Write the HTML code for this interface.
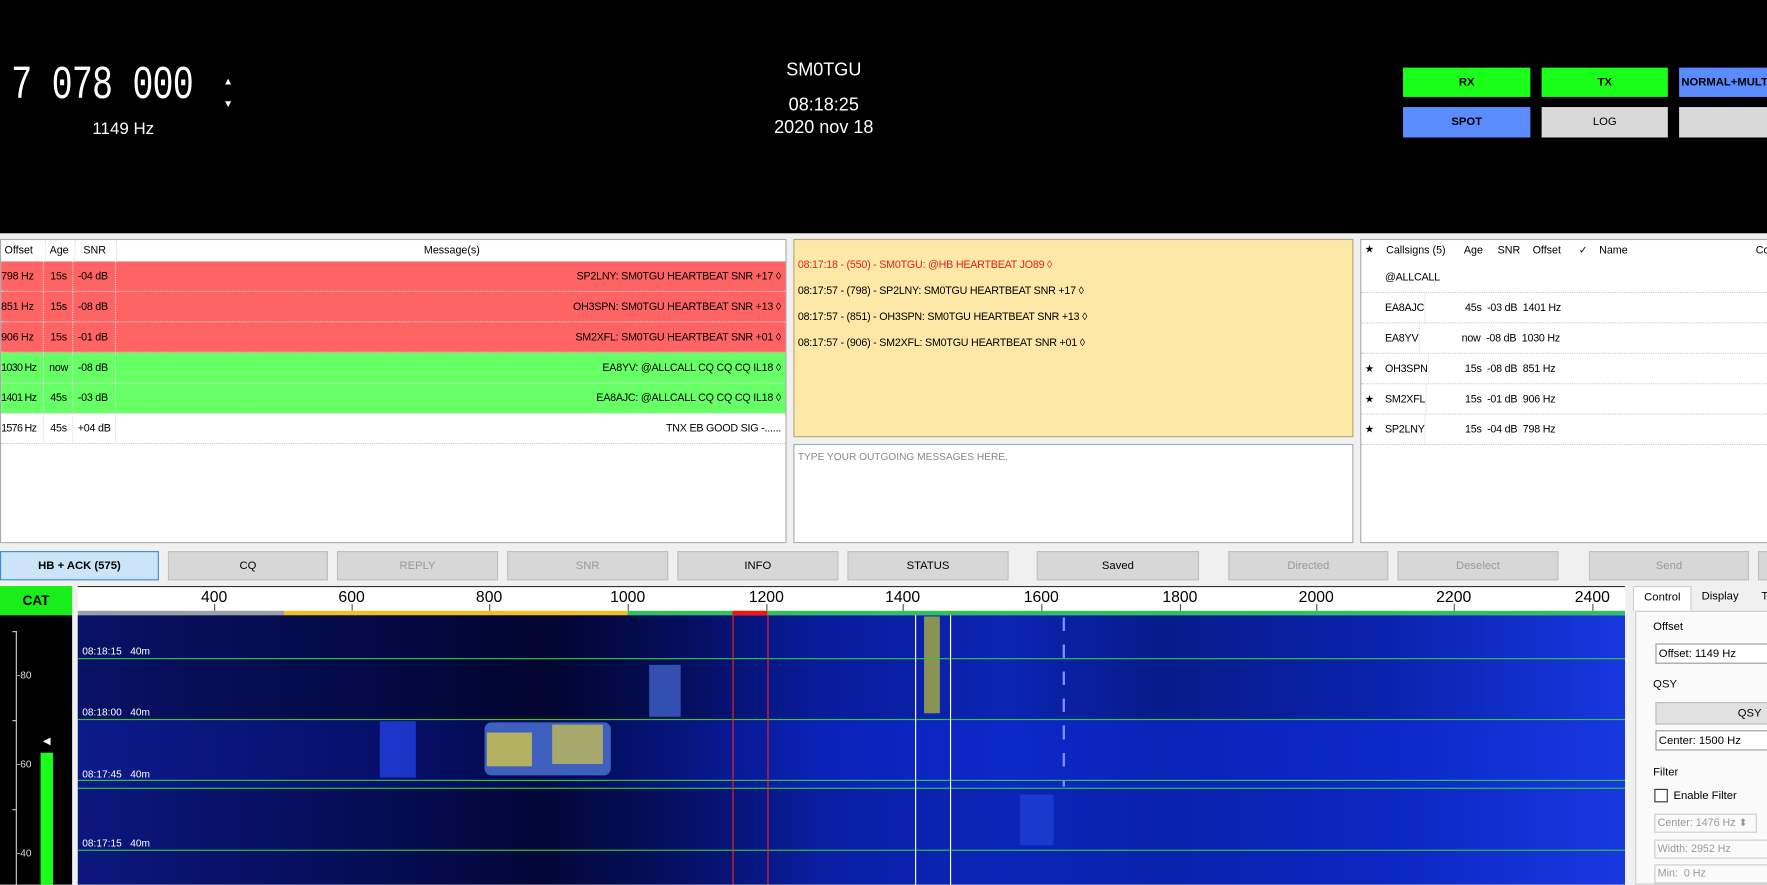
<!DOCTYPE html>
<html><head><meta charset="utf-8"><style>
*{box-sizing:border-box;margin:0;padding:0;white-space:nowrap}
html,body{width:1767px;height:885px;overflow:hidden;background:#f0f0f0}
#w{position:absolute;left:0;top:0;width:1568px;height:785px;transform:scale(1.12691);transform-origin:0 0;font-family:"Liberation Sans",sans-serif;font-size:10px;color:#000}
.a{position:absolute}
.btn{position:absolute;height:26px;display:flex;align-items:center;justify-content:center;font-size:10px}
.row{position:absolute;left:0;height:27px;border-bottom:1px dotted #ccc;font-size:9.5px;letter-spacing:-0.2px}
.c{position:absolute;top:0;height:27px;line-height:27px;border-right:1px dotted #ddd;overflow:hidden}
.wb{position:absolute;top:489px;height:26px;background:#d7d7d7;border:1px solid #bfbfbf;display:flex;align-items:center;justify-content:center;font-size:10px;color:#000}
.dis{color:#9a9a9a}
.gl{position:absolute;left:69px;width:1373px;height:1px;background:#2ecc40}
.ts{position:absolute;left:73px;color:#fff;font-size:9px}
.lab{position:absolute;top:521px;font-size:14px;transform:translateX(-50%)}
.tk{position:absolute;top:536px;width:1px;height:6px;background:#555}
</style></head><body><div id="w">
<div class="a" style="left:0;top:0;width:1568px;height:207px;background:#000"></div>
<div class="a" style="left:10px;top:52px;color:#fff;font-family:'Liberation Mono',monospace;font-size:42px;letter-spacing:-1px;transform:scaleX(0.74);transform-origin:0 0">7 078 000</div>
<div class="a" style="left:198px;top:62px;color:#fff;font-size:9px;line-height:20px;white-space:normal">▲<br>▼</div>
<div class="a" style="left:82px;top:106px;color:#fff;font-size:15px">1149 Hz</div>
<div class="a" style="left:731px;top:54px;color:#fff;font-size:16px;transform:translateX(-50%)">SM0TGU</div>
<div class="a" style="left:731px;top:85px;color:#fff;font-size:16px;transform:translateX(-50%)">08:18:25</div>
<div class="a" style="left:731px;top:105px;color:#fff;font-size:16px;transform:translateX(-50%)">2020 nov 18</div>
<div class="btn" style="left:1245px;top:60px;width:113px;background:#1aff1a;font-weight:bold">RX</div>
<div class="btn" style="left:1368px;top:60px;width:112px;background:#1aff1a;font-weight:bold">TX</div>
<div class="btn" style="left:1490px;top:60px;width:90px;background:#5b8cff;font-weight:bold;justify-content:flex-start;padding-left:2px;overflow:hidden">NORMAL+MULTI</div>
<div class="btn" style="left:1245px;top:95px;width:113px;height:27px;background:#5b8cff;font-weight:bold">SPOT</div>
<div class="btn" style="left:1368px;top:95px;width:112px;height:27px;background:#d9d9d9">LOG</div>
<div class="btn" style="left:1490px;top:95px;width:90px;height:27px;background:#d9d9d9"></div>

<div class="a" style="left:0;top:212px;width:698px;height:270px;background:#fff;border:1px solid #aaa;overflow:hidden;font-size:9.5px">
  <div class="a" style="left:3px;top:4px">Offset</div>
  <div class="a" style="left:43px;top:4px">Age</div>
  <div class="a" style="left:73px;top:4px">SNR</div>
  <div class="a" style="left:39px;top:0;width:1px;height:20px;border-left:1px dotted #ddd"></div>
  <div class="a" style="left:65px;top:0;width:1px;height:20px;border-left:1px dotted #ddd"></div>
  <div class="a" style="left:102px;top:0;width:1px;height:20px;border-left:1px dotted #ddd"></div>
  <div class="a" style="left:400px;top:4px;transform:translateX(-50%)">Message(s)</div>
</div>
<div class="a" style="left:1px;top:232px;width:696px">
 <div class="row" style="top:0;width:696px;background:#ff6464"><div class="c" style="left:0;width:38px">798 Hz</div><div class="c" style="left:39px;width:25px;text-align:center">15s</div><div class="c" style="left:65px;width:37px;padding-left:3px">-04 dB</div><div class="c" style="right:4px;border:none">SP2LNY: SM0TGU HEARTBEAT SNR +17 ◊</div></div>
 <div class="row" style="top:27px;width:696px;background:#ff6464"><div class="c" style="left:0;width:38px">851 Hz</div><div class="c" style="left:39px;width:25px;text-align:center">15s</div><div class="c" style="left:65px;width:37px;padding-left:3px">-08 dB</div><div class="c" style="right:4px;border:none">OH3SPN: SM0TGU HEARTBEAT SNR +13 ◊</div></div>
 <div class="row" style="top:54px;width:696px;background:#ff6464"><div class="c" style="left:0;width:38px">906 Hz</div><div class="c" style="left:39px;width:25px;text-align:center">15s</div><div class="c" style="left:65px;width:37px;padding-left:3px">-01 dB</div><div class="c" style="right:4px;border:none">SM2XFL: SM0TGU HEARTBEAT SNR +01 ◊</div></div>
 <div class="row" style="top:81px;width:696px;background:#66ff66"><div class="c" style="left:0;width:38px;letter-spacing:-0.6px">1030 Hz</div><div class="c" style="left:39px;width:25px;text-align:center">now</div><div class="c" style="left:65px;width:37px;padding-left:3px">-08 dB</div><div class="c" style="right:4px;border:none">EA8YV: @ALLCALL CQ CQ CQ IL18 ◊</div></div>
 <div class="row" style="top:108px;width:696px;background:#66ff66"><div class="c" style="left:0;width:38px;letter-spacing:-0.6px">1401 Hz</div><div class="c" style="left:39px;width:25px;text-align:center">45s</div><div class="c" style="left:65px;width:37px;padding-left:3px">-03 dB</div><div class="c" style="right:4px;border:none">EA8AJC: @ALLCALL CQ CQ CQ IL18 ◊</div></div>
 <div class="row" style="top:135px;width:696px;background:#fff"><div class="c" style="left:0;width:38px;letter-spacing:-0.6px">1576 Hz</div><div class="c" style="left:39px;width:25px;text-align:center">45s</div><div class="c" style="left:65px;width:37px;padding-left:3px">+04 dB</div><div class="c" style="right:4px;border:none">TNX EB GOOD SIG -......</div></div>
</div>

<div class="a" style="left:704px;top:212px;width:497px;height:176px;background:#fde8a8;border:1px solid #b8a878;font-size:9.5px;letter-spacing:-0.2px">
 <div class="a" style="left:3px;top:17px;color:#e02020">08:17:18 - (550) - SM0TGU: @HB HEARTBEAT JO89 ◊</div>
 <div class="a" style="left:3px;top:40px">08:17:57 - (798) - SP2LNY: SM0TGU HEARTBEAT SNR +17 ◊</div>
 <div class="a" style="left:3px;top:63px">08:17:57 - (851) - OH3SPN: SM0TGU HEARTBEAT SNR +13 ◊</div>
 <div class="a" style="left:3px;top:86px">08:17:57 - (906) - SM2XFL: SM0TGU HEARTBEAT SNR +01 ◊</div>
</div>
<div class="a" style="left:704px;top:394px;width:497px;height:88px;background:#fff;border:1px solid #aaa;font-size:9px;color:#888;padding:5px 3px">TYPE YOUR OUTGOING MESSAGES HERE.</div>

<div class="a" style="left:1207px;top:212px;width:370px;height:270px;background:#fff;border:1px solid #aaa;overflow:hidden;font-size:9.5px">
 <div class="a" style="left:3px;top:3px">★</div>
 <div class="a" style="left:22px;top:4px">Callsigns (5)</div>
 <div class="a" style="left:91px;top:4px">Age</div>
 <div class="a" style="left:121px;top:4px">SNR</div>
 <div class="a" style="left:152px;top:4px">Offset</div>
 <div class="a" style="left:193px;top:4px">✓</div>
 <div class="a" style="left:211px;top:4px">Name</div>
 <div class="a" style="left:350px;top:4px">Co</div>
 <div class="a" style="left:0;top:20px;width:370px">
  <div class="row" style="top:0;width:370px"><div class="c" style="left:21px;border:none">@ALLCALL</div></div>
  <div class="row" style="top:27px;width:370px"><div class="c" style="left:21px">EA8AJC</div><div class="c" style="left:92px;border:none">45s &nbsp;-03 dB &nbsp;1401 Hz</div></div>
  <div class="row" style="top:54px;width:370px"><div class="c" style="left:21px">EA8YV</div><div class="c" style="left:89px;border:none">now &nbsp;-08 dB &nbsp;1030 Hz</div></div>
  <div class="row" style="top:81px;width:370px"><div class="c" style="left:3px;border:none">★</div><div class="c" style="left:21px">OH3SPN</div><div class="c" style="left:92px;border:none">15s &nbsp;-08 dB &nbsp;851 Hz</div></div>
  <div class="row" style="top:108px;width:370px"><div class="c" style="left:3px;border:none">★</div><div class="c" style="left:21px">SM2XFL</div><div class="c" style="left:92px;border:none">15s &nbsp;-01 dB &nbsp;906 Hz</div></div>
  <div class="row" style="top:135px;width:370px"><div class="c" style="left:3px;border:none">★</div><div class="c" style="left:21px">SP2LNY</div><div class="c" style="left:92px;border:none">15s &nbsp;-04 dB &nbsp;798 Hz</div></div>
 </div>
</div>

<div class="wb" style="left:0;width:141px;background:#cce4f7;border-color:#3a8ad8;font-weight:bold">HB + ACK (575)</div>
<div class="wb" style="left:149px;width:142px">CQ</div>
<div class="wb dis" style="left:299px;width:143px">REPLY</div>
<div class="wb dis" style="left:450px;width:143px">SNR</div>
<div class="wb" style="left:601px;width:143px">INFO</div>
<div class="wb" style="left:752px;width:143px">STATUS</div>
<div class="wb" style="left:920px;width:144px">Saved</div>
<div class="wb dis" style="left:1090px;width:142px">Directed</div>
<div class="wb dis" style="left:1240px;width:143px">Deselect</div>
<div class="wb dis" style="left:1410px;width:142px">Send</div>
<div class="wb" style="left:1560px;width:20px"></div>

<div class="a" style="left:0;top:520px;width:64px;height:26px;background:#1aee1a;font-size:12px;font-weight:bold;display:flex;align-items:center;justify-content:center">CAT</div>
<div class="a" style="left:0;top:546px;width:64px;height:239px;background:#000"></div>
<div class="a" style="left:14px;top:560px;width:1px;height:225px;background:#ccc"></div>
<div class="a" style="left:11px;top:560px;width:4px;height:1px;background:#ccc"></div>
<div class="a" style="left:11px;top:639px;width:4px;height:1px;background:#ccc"></div>
<div class="a" style="left:11px;top:718px;width:4px;height:1px;background:#ccc"></div>
<div class="a" style="left:15px;top:594px;color:#ddd;font-size:9px">-80</div>
<div class="a" style="left:15px;top:673px;color:#ddd;font-size:9px">-60</div>
<div class="a" style="left:15px;top:752px;color:#ddd;font-size:9px">-40</div>
<div class="a" style="left:38px;top:652px;color:#fff;font-size:9px">◀</div>
<div class="a" style="left:36px;top:668px;width:11px;height:117px;background:#1aff1a"></div>

<div class="a" style="left:69px;top:520px;width:1373px;height:26px;background:#fff;border-top:1px solid #333"></div>
<div class="lab" style="left:190px">400</div><div class="lab" style="left:312px">600</div><div class="lab" style="left:434px">800</div><div class="lab" style="left:557px">1000</div><div class="lab" style="left:680px">1200</div><div class="lab" style="left:801px">1400</div><div class="lab" style="left:924px">1600</div><div class="lab" style="left:1047px">1800</div><div class="lab" style="left:1168px">2000</div><div class="lab" style="left:1290px">2200</div><div class="lab" style="left:1413px">2400</div>
<div class="tk" style="left:190px"></div><div class="tk" style="left:312px"></div><div class="tk" style="left:434px"></div><div class="tk" style="left:557px"></div><div class="tk" style="left:680px"></div><div class="tk" style="left:801px"></div><div class="tk" style="left:924px"></div><div class="tk" style="left:1047px"></div><div class="tk" style="left:1168px"></div><div class="tk" style="left:1290px"></div><div class="tk" style="left:1413px"></div>
<div class="a" style="left:69px;top:542px;width:183px;height:4px;background:#9aa0a8"></div>
<div class="a" style="left:252px;top:542px;width:305px;height:4px;background:#f0c020"></div>
<div class="a" style="left:557px;top:542px;width:93px;height:4px;background:#30c060"></div>
<div class="a" style="left:650px;top:542px;width:31px;height:4px;background:#ff1010"></div>
<div class="a" style="left:681px;top:542px;width:761px;height:4px;background:#30c060"></div>

<div class="a" style="left:69px;top:546px;width:1373px;height:239px;background:linear-gradient(90deg,#0c1a8a 0%,#06106a 20%,#030a4a 30%,#071684 40%,#0b22b8 48%,#0c28c8 60%,#0a24b8 70%,#0c28c8 85%,#1838e0 100%)"></div>
<div class="a" style="left:69px;top:546px;width:1373px;height:93px;background:linear-gradient(90deg,rgba(0,0,20,0.3),rgba(0,0,20,0.5) 30%,rgba(0,0,30,0.2) 45%,rgba(0,0,0,0.1) 60%,rgba(0,0,0,0.25) 70%,rgba(0,0,0,0))"></div>
<div class="a" style="left:69px;top:699px;width:1373px;height:86px;background:linear-gradient(90deg,rgba(0,0,20,0.1),rgba(0,0,20,0.35) 30%,rgba(0,0,0,0.1) 50%,rgba(0,0,0,0))"></div>
<div class="a" style="left:337px;top:640px;width:32px;height:50px;background:#2040e0;opacity:.8"></div>
<div class="a" style="left:430px;top:641px;width:112px;height:47px;background:#4060c0;border-radius:6px"></div>
<div class="a" style="left:432px;top:650px;width:40px;height:30px;background:#c8c050;opacity:.85"></div>
<div class="a" style="left:490px;top:643px;width:45px;height:35px;background:#c8c050;opacity:.75"></div>
<div class="a" style="left:576px;top:590px;width:28px;height:46px;background:#4060c8;opacity:.8"></div>
<div class="a" style="left:820px;top:547px;width:14px;height:86px;background:#a8b040;opacity:.8"></div>
<div class="a" style="left:943px;top:548px;width:2px;height:150px;background:repeating-linear-gradient(#8090ff 0 12px,transparent 12px 24px)"></div>
<div class="a" style="left:905px;top:705px;width:30px;height:45px;background:#2848e0;opacity:.6"></div>
<div class="gl" style="top:584px"></div><div class="gl" style="top:638px"></div><div class="gl" style="top:692px"></div><div class="gl" style="top:699px"></div><div class="gl" style="top:754px"></div>
<div class="ts" style="top:573px">08:18:15 &nbsp; 40m</div>
<div class="ts" style="top:627px">08:18:00 &nbsp; 40m</div>
<div class="ts" style="top:682px">08:17:45 &nbsp; 40m</div>
<div class="ts" style="top:743px">08:17:15 &nbsp; 40m</div>
<div class="a" style="left:650px;top:546px;width:1px;height:239px;background:#ff2020"></div>
<div class="a" style="left:681px;top:546px;width:1px;height:239px;background:#ff2020"></div>
<div class="a" style="left:812px;top:546px;width:1px;height:239px;background:#fff"></div>
<div class="a" style="left:843px;top:546px;width:1px;height:239px;background:#fff"></div>

<div class="a" style="left:1448px;top:520px;width:120px;height:265px;background:#f0f0f0"></div>
<div class="a" style="left:1449px;top:520px;width:52px;height:22px;background:#fff;border:1px solid #ccc;border-bottom:none;font-size:10px;padding:4px 0 0 9px">Control</div>
<div class="a" style="left:1510px;top:524px;font-size:10px">Display</div>
<div class="a" style="left:1563px;top:524px;font-size:10px">T</div>
<div class="a" style="left:1451px;top:542px;width:120px;height:243px;background:#fafafa;border:1px solid #ccc"></div>
<div class="a" style="left:1467px;top:551px;font-size:10px">Offset</div>
<div class="a" style="left:1469px;top:571px;width:110px;height:18px;background:#fff;border:1px solid #999;font-size:10px;padding:3px 2px">Offset: 1149 Hz</div>
<div class="a" style="left:1467px;top:602px;font-size:10px">QSY</div>
<div class="a" style="left:1469px;top:623px;width:110px;height:20px;background:#e1e1e1;border:1px solid #bbb;font-size:10px;padding:4px 0 0 72px">QSY</div>
<div class="a" style="left:1469px;top:648px;width:110px;height:18px;background:#fff;border:1px solid #999;font-size:10px;padding:3px 2px">Center: 1500 Hz</div>
<div class="a" style="left:1467px;top:680px;font-size:10px">Filter</div>
<div class="a" style="left:1468px;top:700px;width:12px;height:12px;background:#fff;border:1px solid #333"></div>
<div class="a" style="left:1485px;top:701px;font-size:10px">Enable Filter</div>
<div class="a" style="left:1468px;top:722px;width:91px;height:17px;border:1px solid #ccc;font-size:9.5px;color:#999;padding:2px">Center: 1476 Hz ⬍</div>
<div class="a" style="left:1468px;top:745px;width:110px;height:17px;border:1px solid #ccc;font-size:9.5px;color:#999;padding:2px">Width: 2952 Hz</div>
<div class="a" style="left:1468px;top:767px;width:110px;height:17px;border:1px solid #ccc;font-size:9.5px;color:#999;padding:2px">Min: &nbsp;0 Hz</div>
</div></body></html>
